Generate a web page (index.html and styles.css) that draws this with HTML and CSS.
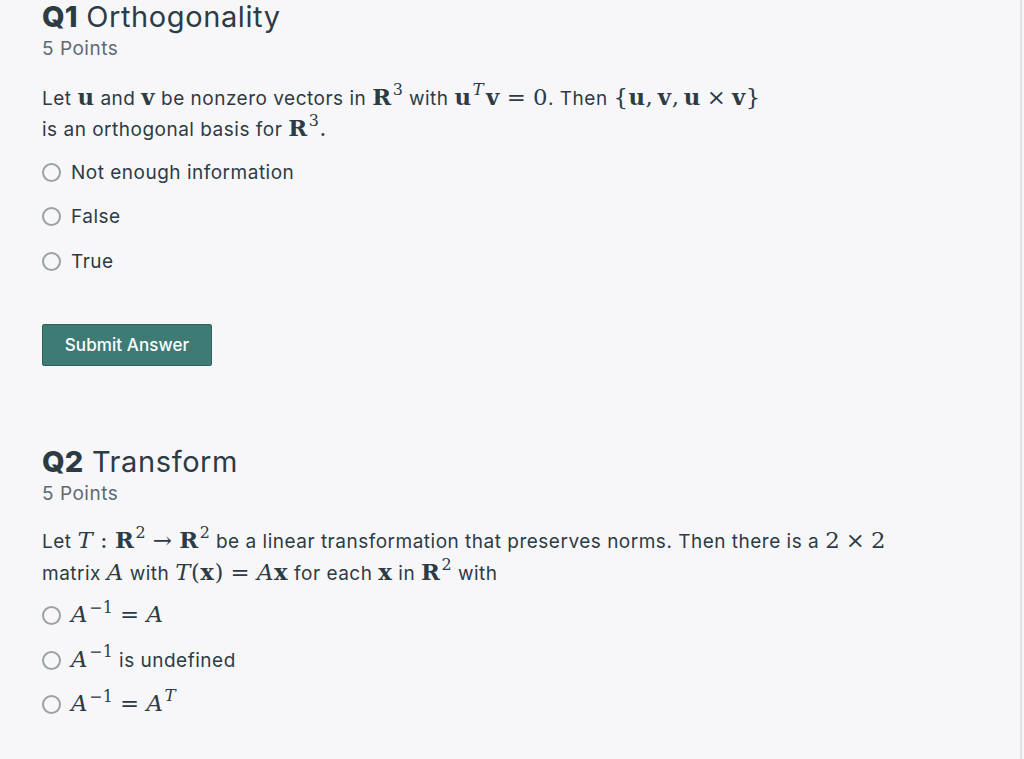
FILE: index.html
```html
<!DOCTYPE html>
<html>
<head>
<meta charset="utf-8">
<link rel="stylesheet" href="styles.css">
</head>
<body>
<div class="frame">
  <section class="q">
    <h2 class="q-title"><b>Q1</b> Orthogonality</h2>
    <div class="points">5 Points</div>
    <div class="prompt">
      <p>Let <span class="mb">u</span> and <span class="mb">v</span> be nonzero vectors in <span class="mb">R</span><sup class="ms">3</sup> with <span class="mb">u</span><sup class="ms mi">T</sup><span class="mb">v</span><span class="mr rel">=</span><span class="mr">0</span>. Then <span class="mr">{</span><span class="mb">u</span><span class="mr pun">,</span><span class="mb">v</span><span class="mr pun">,</span><span class="mb">u</span><span class="mr bin">×</span><span class="mb">v</span><span class="mr">}</span><br>is an orthogonal basis for <span class="mb">R</span><sup class="ms">3</sup><span class="mr">.</span></p>
    </div>
    <div class="options">
      <label class="opt"><span class="radio"></span><span>Not enough information</span></label>
      <label class="opt"><span class="radio"></span><span>False</span></label>
      <label class="opt"><span class="radio"></span><span>True</span></label>
    </div>
    <button class="submit">Submit Answer</button>
  </section>

  <section class="q q2">
    <h2 class="q-title"><b>Q2</b> Transform</h2>
    <div class="points">5 Points</div>
    <div class="prompt">
      <p>Let <span class="mi">T</span><span class="mr rel">:</span><span class="mb">R</span><sup class="ms">2</sup><span class="mr rel">→</span><span class="mb">R</span><sup class="ms">2</sup> be a linear transformation that preserves norms. Then there is a <span class="mr">2</span><span class="mr bin">×</span><span class="mr">2</span><br>matrix <span class="mi">A</span> with <span class="mi">T</span><span class="mr">(</span><span class="mb">x</span><span class="mr">)</span><span class="mr rel">=</span><span class="mi">A</span><span class="mb">x</span> for each <span class="mb">x</span> in <span class="mb">R</span><sup class="ms">2</sup> with</p>
    </div>
    <div class="options">
      <label class="opt"><span class="radio"></span><span><span class="mi">A</span><sup class="ms">−1</sup><span class="mr rel">=</span><span class="mi">A</span></span></label>
      <label class="opt"><span class="radio"></span><span><span class="mi">A</span><sup class="ms">−1</sup> is undefined</span></label>
      <label class="opt"><span class="radio"></span><span><span class="mi">A</span><sup class="ms">−1</sup><span class="mr rel">=</span><span class="mi">A</span><sup class="ms mi">T</sup></span></label>
    </div>
  </section>
</div>
</body>
</html>
```

FILE: styles.css
```css
html, body {
  margin: 0;
  padding: 0;
  background: #f7f7f9;
}
body {
  font-family: "Inter", "Open Sans", sans-serif;
  color: #2d3b45;
  height: 759px;
  overflow: hidden;
}
.frame {
  border-right: 2px solid #dfe3e6;
  width: 1022px;
  height: 759px;
  box-sizing: border-box;
  padding: 0 42px;
}
.q-title {
  margin: 0;
  font-size: 29px;
  line-height: 34px;
  font-weight: 400;
  letter-spacing: 0.6px;
}
.q-title b {
  font-weight: 800;
  letter-spacing: 0;
}
.points {
  margin-top: 1px;
  font-size: 19px;
  line-height: 28px;
  letter-spacing: 0.5px;
  color: #5d6a73;
}
.prompt {
  margin-top: 20px;
}
.prompt p {
  margin: 0;
  font-size: 19px;
  line-height: 31px;
  letter-spacing: 0.5px;
}
.mb, .mr, .mi, .ms {
  font-family: "DejaVu Serif", "Liberation Serif", serif;
}
.mb {
  font-weight: 700;
  font-size: 1.2em;
  line-height: 0;
  letter-spacing: 0.6px;
}
.mr {
  font-size: 1.2em;
  line-height: 0;
  letter-spacing: 0.4px;
}
.mi {
  font-style: italic;
  font-size: 1.2em;
  line-height: 0;
  letter-spacing: 0.6px;
}
.rel {
  margin: 0 0.3em;
}
.bin {
  margin: 0 0.25em;
}
.pun {
  margin-right: 0.2em;
}
.ms {
  font-size: 0.84em;
  line-height: 0;
  vertical-align: 0.6em;
  font-style: normal;
  letter-spacing: 0.3px;
  margin-left: 1px;
}
.ms.mi {
  font-style: italic;
  font-size: 0.88em;
  margin-right: 2px;
}
.options {
  margin-top: 5px;
  display: flex;
  flex-direction: column;
}
.opt {
  display: flex;
  align-items: center;
  height: 44.5px;
  font-size: 19px;
  letter-spacing: 0.5px;
}
.radio {
  width: 15px;
  height: 15px;
  border: 2.5px solid #9ba2a1;
  border-radius: 50%;
  margin-right: 10px;
  flex: none;
}
.submit {
  margin-top: 40px;
  width: 170px;
  height: 42px;
  background: #3e7b75;
  border: 1px solid #2f625d;
  border-radius: 2px;
  color: #fff;
  font-family: "Inter", "Open Sans", sans-serif;
  font-weight: 500;
  font-size: 17px;
  letter-spacing: 0.1px;
  padding: 0;
}
.q2 {
  margin-top: 79px;
}
.q2 .prompt {
  margin-top: 18px;
}
.q2 .prompt p {
  line-height: 32px;
}
.q2 .options {
  margin-top: 4px;
}
```
